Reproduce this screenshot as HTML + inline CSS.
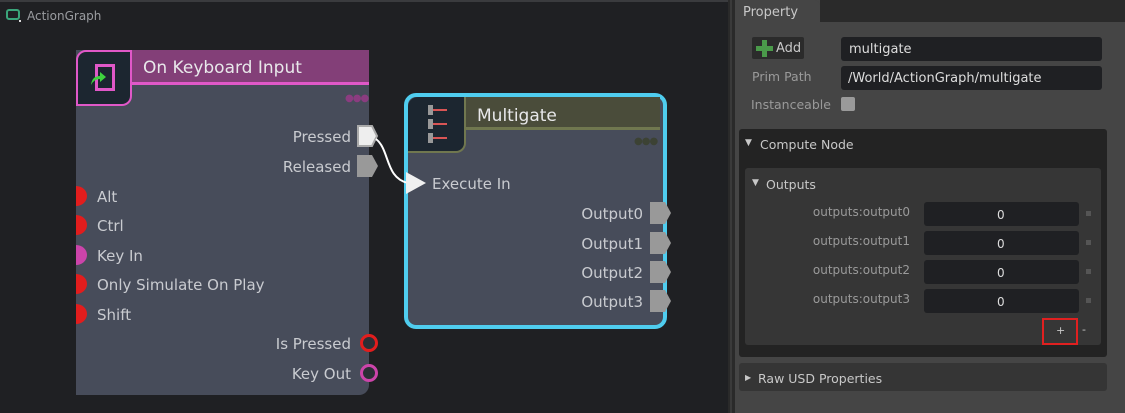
<!DOCTYPE html><html><head><style>
*{margin:0;padding:0;box-sizing:border-box}
body{width:1125px;height:413px;background:#1f2023;position:relative;overflow:hidden;font-family:"DejaVu Sans","Liberation Sans",sans-serif;}
.a{position:absolute}
.t{position:absolute;color:#c9cbd0;font-size:15px;white-space:nowrap}
.r{text-align:right}
.s{position:absolute;font-size:12px;color:#c8c8c8;white-space:nowrap}
.f{position:absolute;background:#1f2023;border-radius:3px}
</style></head><body>
<div class="a" style="left:0;top:0;width:728px;height:2px;background:#3a3b3e"></div>
<svg class="a" style="left:6px;top:8px" width="16" height="16"><rect x="1" y="2" width="12" height="9" rx="2" fill="none" stroke="#3aa57a" stroke-width="2"/><rect x="13" y="12" width="2" height="2" fill="#ddd"/></svg>
<div class="s" style="left:27px;top:9px;color:#9a9ca0">ActionGraph</div>

<!-- Keyboard node -->
<div class="a" style="left:76px;top:50px;width:293px;height:345px;background:#474c5a;border-radius:0 0 10px 0"></div>
<div class="a" style="left:130px;top:50px;width:239px;height:32px;background:#833f78"></div>
<div class="a" style="left:130px;top:82px;width:239px;height:3px;background:#e058c8"></div>
<div class="a" style="left:76px;top:50px;width:56px;height:56px;background:#1c2630;border:2px solid #e058c8;border-radius:10px 0 10px 0"></div>
<svg class="a" style="left:88px;top:62px" width="32" height="32"><rect x="8.5" y="3.5" width="17" height="24" fill="none" stroke="#e058c8" stroke-width="3"/><path d="M3 23 Q4 14 12 14 L12 10 L18 15 L12 20 L12 17 Q6 17 3 23Z" fill="#3ed43e"/></svg>
<div class="t" style="left:143px;top:58px;font-size:17px;color:#e8e8ea">On Keyboard Input</div>
<div class="a" style="left:345px;top:93px;color:#8b3c80;font-size:10px;letter-spacing:-1px">●●●</div>
<div class="t r" style="right:774px;top:128px">Pressed</div>
<div class="t r" style="right:774px;top:158px">Released</div>
<div class="t" style="left:97px;top:188px">Alt</div>
<div class="t" style="left:97px;top:217px">Ctrl</div>
<div class="t" style="left:97px;top:247px">Key In</div>
<div class="t" style="left:97px;top:276px">Only Simulate On Play</div>
<div class="t" style="left:97px;top:306px">Shift</div>
<div class="t r" style="right:774px;top:335px">Is Pressed</div>
<div class="t r" style="right:774px;top:365px">Key Out</div>

<!-- Multigate node -->
<div class="a" style="left:404px;top:93px;width:263px;height:236px;background:#474c5a;border:4px solid #4fcdef;border-radius:12px"></div>
<div class="a" style="left:464px;top:97px;width:196px;height:31px;background:#4a4c3a"></div>
<div class="a" style="left:464px;top:127px;width:196px;height:3px;background:#70774f"></div>
<div class="a" style="left:408px;top:97px;width:58px;height:56px;background:#1c2630;border:2px solid #70774f;border-top:none;border-left:none;border-radius:10px 0 10px 0"></div>
<svg class="a" style="left:420px;top:100px" width="40" height="50"><g fill="#999"><rect x="8" y="5" width="5" height="10"/><rect x="8" y="19" width="5" height="10"/><rect x="8" y="33" width="5" height="10"/></g><g fill="#d95555"><rect x="13" y="9" width="14" height="2"/><rect x="13" y="23" width="14" height="2"/><rect x="13" y="37" width="14" height="2"/></g></svg>
<div class="t" style="left:477px;top:106px;font-size:17px;color:#e8e8ea">Multigate</div>
<div class="a" style="left:634px;top:136px;color:#3c4234;font-size:10px;letter-spacing:-1px">●●●</div>
<div class="t" style="left:432px;top:175px">Execute In</div>
<div class="t r" style="right:482px;top:205px">Output0</div>
<div class="t r" style="right:482px;top:235px">Output1</div>
<div class="t r" style="right:482px;top:264px">Output2</div>
<div class="t r" style="right:482px;top:293px">Output3</div>

<svg class="a" style="left:0;top:0" width="728" height="413">
<g fill="#999"><path d="M358 126h14l5 10l-5 10h-14z" fill="#eee" stroke="#aaa" stroke-width="2"/><path d="M357 155h15l6 11l-6 11h-15z"/>
<path d="M650 202h15l6 11l-6 11h-15z"/><path d="M650 232h15l6 11l-6 11h-15z"/><path d="M650 261h15l6 11l-6 11h-15z"/><path d="M650 290h15l6 11l-6 11h-15z"/></g>
<path d="M376 139 C390 150 385 178 408 183" stroke="#fff" stroke-width="2" fill="none"/>
<path d="M406 172l20 11l-20 11z" fill="#f0f0f0"/>
<g><path d="M76 186a11 10 0 0 1 0 20z" fill="#e21d1d"/><path d="M76 215a11 10 0 0 1 0 20z" fill="#e21d1d"/><path d="M76 245a11 10 0 0 1 0 20z" fill="#cc44aa"/><path d="M76 274a11 10 0 0 1 0 20z" fill="#e21d1d"/><path d="M76 304a11 10 0 0 1 0 20z" fill="#e21d1d"/></g>
<circle cx="369" cy="343" r="7.5" fill="#2b2f36" stroke="#e21d1d" stroke-width="3"/>
<circle cx="369" cy="373" r="7.5" fill="#2b2f36" stroke="#cc44aa" stroke-width="3"/>
</svg>

<!-- divider -->
<div class="a" style="left:728px;top:0;width:7px;height:413px;background:#2a2a2a"></div>
<div class="a" style="left:730px;top:0;width:2px;height:413px;background:#3a3a3a"></div>

<!-- Right panel -->
<div class="a" style="left:735px;top:0;width:390px;height:413px;background:#454545"></div>
<div class="a" style="left:820px;top:0;width:305px;height:22px;background:#2a2a2a"></div>
<div class="a" style="left:735px;top:0;width:85px;height:22px;background:#454545;border-radius:0 6px 0 0"></div>
<div class="s" style="left:743px;top:5px;font-size:13px">Property</div>
<div class="a" style="left:752px;top:37px;width:52px;height:22px;background:#2b2b2b;border-radius:2px"></div>
<svg class="a" style="left:756px;top:40px" width="17" height="17"><path d="M6 0h5v6h6v5h-6v6h-5v-6h-6v-5h6z" fill="#4a9a4a"/></svg>
<div class="s" style="left:776px;top:41px;font-size:13px">Add</div>
<div class="f" style="left:841px;top:37px;width:261px;height:24px"></div>
<div class="s" style="left:849px;top:42px;font-size:13px;color:#ddd">multigate</div>
<div class="s" style="left:752px;top:69px;color:#9a9a9a;font-size:12.5px">Prim Path</div>
<div class="f" style="left:841px;top:66px;width:261px;height:24px"></div>
<div class="s" style="left:848px;top:71px;font-size:13px;color:#ddd">/World/ActionGraph/multigate</div>
<div class="s" style="left:751px;top:97px;color:#9a9a9a;font-size:12.5px">Instanceable</div>
<div class="a" style="left:841px;top:97px;width:14px;height:14px;background:#9a9a9a;border-radius:2px"></div>

<div class="a" style="left:739px;top:129px;width:368px;height:228px;background:#232323;border-radius:3px"></div>
<div class="s" style="left:745px;top:138px;font-size:9px">▼</div>
<div class="s" style="left:760px;top:137px;font-size:12.5px">Compute Node</div>
<div class="a" style="left:745px;top:168px;width:356px;height:177px;background:#363636;border-radius:3px"></div>
<div class="s" style="left:752px;top:178px;font-size:9px">▼</div>
<div class="s" style="left:766px;top:177px;font-size:12.5px">Outputs</div>

<div class="s r" style="right:215px;top:205px;color:#9a9a9a">outputs:output0</div>
<div class="s r" style="right:215px;top:234px;color:#9a9a9a">outputs:output1</div>
<div class="s r" style="right:215px;top:263px;color:#9a9a9a">outputs:output2</div>
<div class="s r" style="right:215px;top:292px;color:#9a9a9a">outputs:output3</div>
<div class="f" style="left:924px;top:202px;width:155px;height:24px"></div>
<div class="f" style="left:924px;top:231px;width:155px;height:24px"></div>
<div class="f" style="left:924px;top:260px;width:155px;height:24px"></div>
<div class="f" style="left:924px;top:289px;width:155px;height:24px"></div>
<div class="s" style="left:997px;top:208px;color:#ddd">0</div>
<div class="s" style="left:997px;top:237px;color:#ddd">0</div>
<div class="s" style="left:997px;top:266px;color:#ddd">0</div>
<div class="s" style="left:997px;top:295px;color:#ddd">0</div>
<div class="a" style="left:1086px;top:211px;width:5px;height:5px;background:#555"></div>
<div class="a" style="left:1086px;top:240px;width:5px;height:5px;background:#555"></div>
<div class="a" style="left:1086px;top:269px;width:5px;height:5px;background:#555"></div>
<div class="a" style="left:1086px;top:298px;width:5px;height:5px;background:#555"></div>
<div class="a" style="left:1042px;top:318px;width:36px;height:27px;border:2px solid #e02020"></div>
<div class="s" style="left:1056px;top:324px;font-size:11px">+</div>
<div class="s" style="left:1082px;top:323px;font-size:11px">-</div>

<div class="a" style="left:739px;top:363px;width:368px;height:28px;background:#353535;border-radius:3px"></div>
<div class="s" style="left:745px;top:373px;font-size:8px">▶</div>
<div class="s" style="left:758px;top:371px;font-size:12.5px">Raw USD Properties</div>
</body></html>
